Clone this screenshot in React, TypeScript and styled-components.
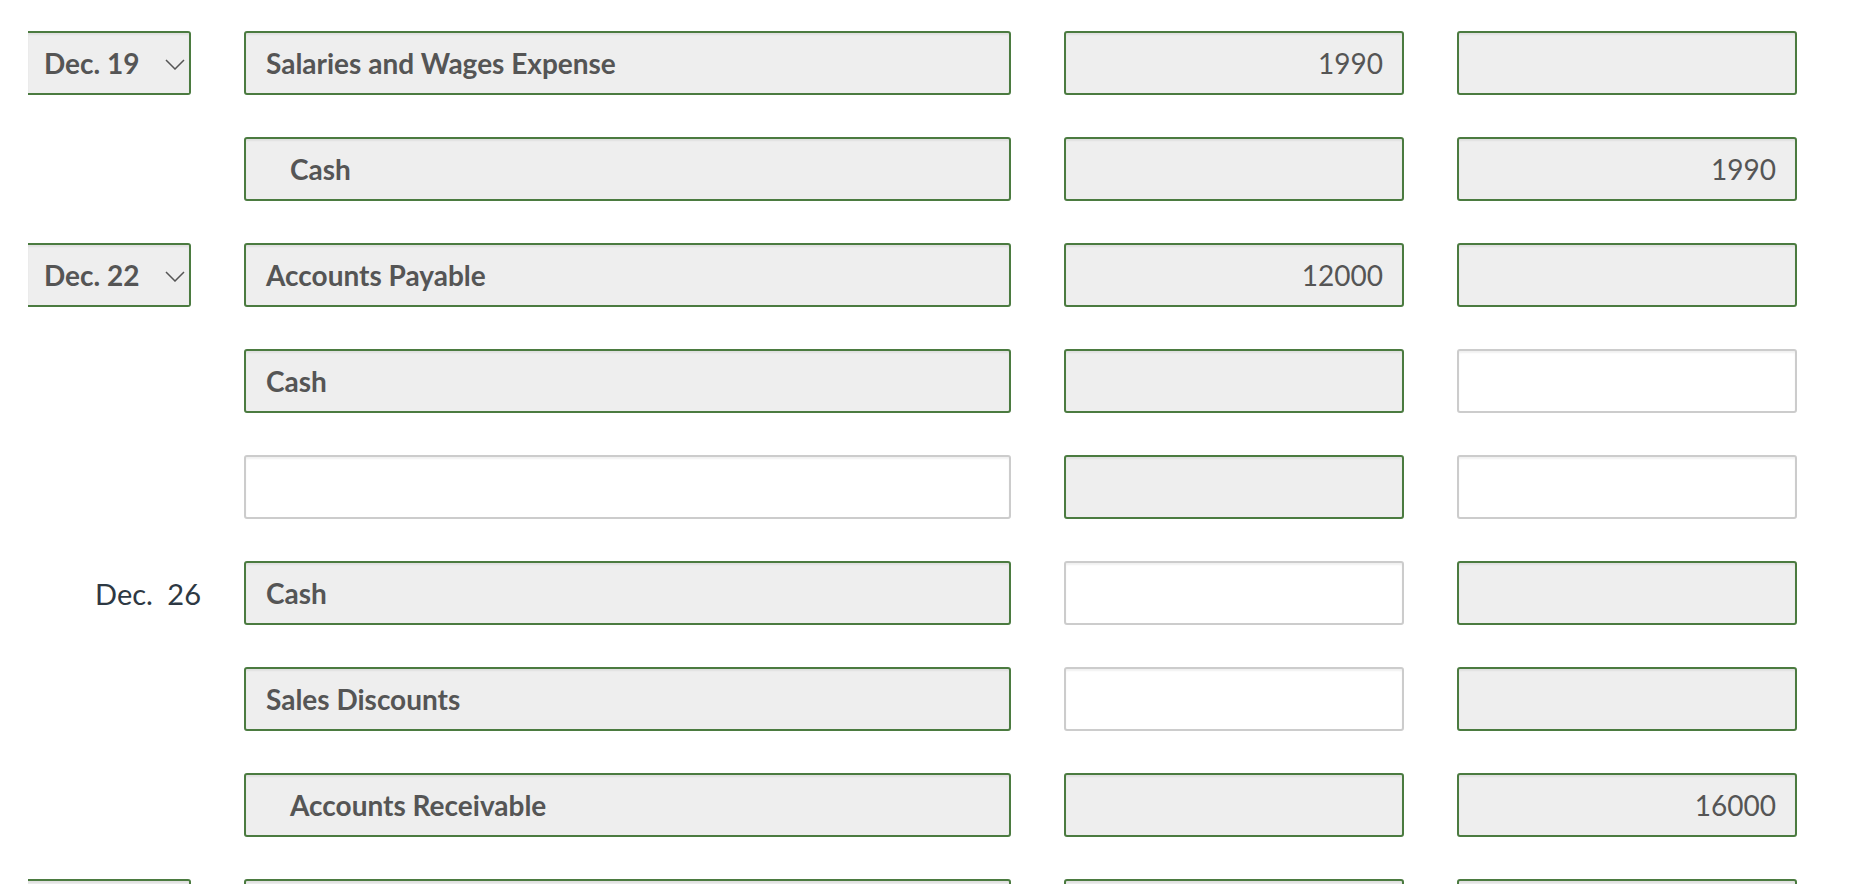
import styled, { createGlobalStyle } from "styled-components";

const GlobalStyle = createGlobalStyle`
  body {
    margin: 0;
    background: #ffffff;
    font-family: Lato, "Open Sans", sans-serif;
    overflow: hidden;
  }
`;

type Row = {
  date?: string;
  dateKind?: "select" | "text";
  account?: string;
  indent?: boolean;
  debit?: string | null;
  credit?: string | null;
};

// null = white (unanswered) box, string = filled (answered) box
const rows: Row[] = [
  { date: "Dec. 19", dateKind: "select", account: "Salaries and Wages Expense", debit: "1990", credit: "" },
  { account: "Cash", indent: true, debit: "", credit: "1990" },
  { date: "Dec. 22", dateKind: "select", account: "Accounts Payable", debit: "12000", credit: "" },
  { account: "Cash", debit: "", credit: null },
  { account: undefined, debit: "", credit: null },
  { date: "Dec. 26", dateKind: "text", account: "Cash", debit: null, credit: "" },
  { account: "Sales Discounts", debit: null, credit: "" },
  { account: "Accounts Receivable", indent: true, debit: "", credit: "16000" },
  { date: "", dateKind: "select", account: "", debit: "", credit: "" },
];

export default function App() {
  return (
    <>
      <GlobalStyle />
      <Sheet>
        {rows.map((row, i) => (
          <EntryRow key={i}>
            <DateCell>
              {row.dateKind === "select" && (
                <DateSelect>
                  <span>{row.date}</span>
                  <Chevron width="20" height="11" viewBox="0 0 20 11">
                    <path d="M1 1l9 9 9-9" fill="none" stroke="#555" strokeWidth="1.5" />
                  </Chevron>
                </DateSelect>
              )}
              {row.dateKind === "text" && <DateText>{row.date}</DateText>}
            </DateCell>
            <Field $filled={row.account !== undefined} $indent={row.indent}>
              {row.account}
            </Field>
            <Amount $filled={row.debit !== null}>{row.debit}</Amount>
            <Amount $filled={row.credit !== null}>{row.credit}</Amount>
          </EntryRow>
        ))}
      </Sheet>
    </>
  );
}

const Sheet = styled.div`
  display: flex;
  flex-direction: column;
  gap: 42px;
  padding: 31px 0 0 28px;
  height: 853px;
  overflow: hidden;
`;

const EntryRow = styled.div`
  display: grid;
  grid-template-columns: 163px 767px 340px 340px;
  column-gap: 53px;
  height: 64px;
  flex-shrink: 0;
`;

const DateCell = styled.div`
  display: flex;
  align-items: center;
  justify-content: flex-end;
`;

const DateSelect = styled.div`
  display: flex;
  align-items: center;
  justify-content: space-between;
  box-sizing: border-box;
  width: 100%;
  height: 64px;
  padding: 0 4px 0 16px;
  background: #eeeeee;
  border: 2px solid #4b7b40;
  border-left: none;
  border-radius: 0 3px 3px 0;
  box-shadow: inset 0 2px 2px rgba(0, 0, 0, 0.06);
  color: #555555;
  font-size: 28px;
  font-weight: 700;
`;

const Chevron = styled.svg`
  display: block;
  margin-top: 2px;
`;

const DateText = styled.span`
  margin-right: -10px;
  color: #2d3843;
  font-size: 29px;
  font-weight: 400;
  word-spacing: 7px;
`;

const Box = styled.div<{ $filled: boolean }>`
  box-sizing: border-box;
  height: 64px;
  display: flex;
  align-items: center;
  border-radius: 3px;
  border: 2px solid ${(p) => (p.$filled ? "#4b7b40" : "#cccccc")};
  background: ${(p) => (p.$filled ? "#eeeeee" : "#ffffff")};
  box-shadow: inset 0 2px 2px rgba(0, 0, 0, 0.06);
  color: #555555;
  font-size: 28px;
  white-space: nowrap;
  overflow: hidden;
`;

const Field = styled(Box)<{ $indent?: boolean }>`
  padding-left: ${(p) => (p.$indent ? "44px" : "20px")};
  font-weight: 700;
`;

const Amount = styled(Box)`
  justify-content: flex-end;
  padding-right: 19px;
  font-weight: 400;
`;
